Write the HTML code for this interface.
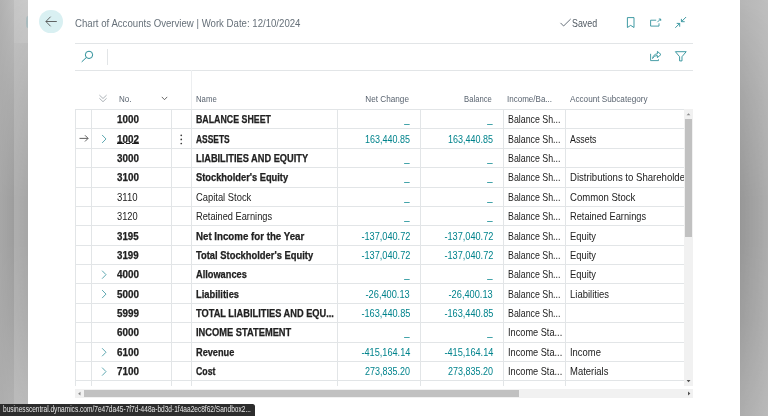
<!DOCTYPE html>
<html lang="en"><head><meta charset="utf-8"><title>Chart of Accounts Overview</title>
<style>
html,body{margin:0;padding:0}
body{width:768px;height:416px;overflow:hidden;position:relative;background:#fff;font-family:"Liberation Sans",sans-serif;font-size:10.2px;color:#212121}
.abs,.t,.hl,.vl{position:absolute}
.t{white-space:nowrap;line-height:12px;height:12px;transform-origin:0 50%}
.r{transform-origin:100% 50%;text-align:right}
.b{font-weight:bold;-webkit-text-stroke:.25px #212121}
.n{color:#00838c}
.h{color:#5a6470;font-size:8.8px}
.hl{height:1px;background:#e2e5e7}
.vl{width:1px;background:#e2e5e7}
svg{position:absolute;overflow:visible}
</style></head><body>

<div class="abs" style="left:0;top:0;width:14px;height:416px;background:linear-gradient(90deg,#b2b2b2,#c0c0c0)"></div>
<div class="abs" style="left:0;top:0;width:14px;height:416px;background:linear-gradient(90deg,rgba(0,0,0,.06),rgba(0,0,0,.18));-webkit-mask-image:linear-gradient(180deg,rgba(0,0,0,.08) 0,rgba(0,0,0,.6) 24%,#000 48%,#000 58%,rgba(0,0,0,.8) 77%,rgba(0,0,0,.35) 100%);mask-image:linear-gradient(180deg,rgba(0,0,0,.08) 0,rgba(0,0,0,.6) 24%,#000 48%,#000 58%,rgba(0,0,0,.8) 77%,rgba(0,0,0,.35) 100%)"></div>
<div class="abs" style="left:14px;top:0;width:14px;height:416px;background:linear-gradient(90deg,#c9c9c9,#cdcdcd)"></div>
<div class="abs" style="left:14px;top:43px;width:14px;height:373px;background:linear-gradient(90deg,#c4c4c4,#c7c7c7)"></div>
<div class="abs" style="left:25.5px;top:16px;width:2.5px;height:11.5px;background:#b0c2c5;border-radius:100% 0 0 100%/50% 0 0 50%"></div>
<div class="abs" style="left:14px;top:0;width:14px;height:416px;background:linear-gradient(90deg,rgba(0,0,0,.11),rgba(0,0,0,.16));-webkit-mask-image:linear-gradient(180deg,rgba(0,0,0,.08) 0,rgba(0,0,0,.6) 24%,#000 48%,#000 58%,rgba(0,0,0,.8) 77%,rgba(0,0,0,.35) 100%);mask-image:linear-gradient(180deg,rgba(0,0,0,.08) 0,rgba(0,0,0,.6) 24%,#000 48%,#000 58%,rgba(0,0,0,.8) 77%,rgba(0,0,0,.35) 100%)"></div>
<div class="abs" style="left:740px;top:0;width:28px;height:416px;background:linear-gradient(90deg,#b9b9b9,#c1c1c1)"></div>
<div class="abs" style="left:740px;top:0;width:28px;height:416px;background:linear-gradient(90deg,rgba(0,0,0,.18),rgba(0,0,0,.10));-webkit-mask-image:linear-gradient(180deg,rgba(0,0,0,.08) 0,rgba(0,0,0,.6) 24%,#000 48%,#000 58%,rgba(0,0,0,.8) 77%,rgba(0,0,0,.35) 100%);mask-image:linear-gradient(180deg,rgba(0,0,0,.08) 0,rgba(0,0,0,.6) 24%,#000 48%,#000 58%,rgba(0,0,0,.8) 77%,rgba(0,0,0,.35) 100%)"></div>
<div class="abs" style="left:39.2px;top:9.8px;width:23.6px;height:23.6px;border-radius:50%;background:#d9f0f2"></div>
<svg style="left:45px;top:15px" width="14" height="14" viewBox="0 0 14 14"><g transform="translate(0.2,0.5)"><path d="M11.6 6H0.8M5.4 1.2L0.7 6l4.7 4.8" fill="none" stroke="#4a4a4a" stroke-width="0.85"/></g></svg>
<div class="t" style="left:75px;top:17.8px;font-size:10.2px;color:#667079;transform:scaleX(.945)">Chart of Accounts Overview | Work Date: 12/10/2024</div>
<svg style="left:559px;top:18px" width="14" height="10" viewBox="0 0 14 10"><g transform="translate(0.7,0.0)"><path d="M0.8 4.9L3.9 8L11 1" fill="none" stroke="#5f6873" stroke-width="0.95"/></g></svg>
<div class="t" style="left:572.3px;top:17.6px;font-size:10.3px;color:#4f5861;transform:scaleX(.86)">Saved</div>
<svg style="left:626px;top:17px" width="11" height="13" viewBox="0 0 11 13"><g transform="translate(0.5,0.0)"><path d="M0.9 0.6H7.5V10.5L4.2 8.4L0.9 10.5Z" fill="none" stroke="#2a8e98" stroke-width="0.9"/></g></svg>
<svg style="left:650px;top:17px" width="13" height="12" viewBox="0 0 13 12"><g transform="translate(0.0,0.9)"><path d="M6.2 2.3H0.6V8.2H9V5.4" fill="none" stroke="#2a8e98" stroke-width="0.85"/><path d="M7.4 4.3L10.4 1.3M8.8 1.1H10.7V3" fill="none" stroke="#2a8e98" stroke-width="0.85"/></g></svg>
<svg style="left:675px;top:17px" width="13" height="13" viewBox="0 0 13 13"><g transform="translate(0.0,0.0)"><path d="M11.1 0L6.5 4.6M6.4 1.9V4.7H9.7M0.3 10.8L4.6 6.5M1.7 6.4H4.7V9.7" fill="none" stroke="#2a8e98" stroke-width="0.9"/></g></svg>
<div class="hl" style="left:75px;top:43px;width:618px"></div>
<div class="hl" style="left:75px;top:69.6px;width:618px"></div>
<svg style="left:81px;top:50px" width="14" height="13" viewBox="0 0 14 13"><g transform="translate(0.0,0.0)"><circle cx="8" cy="4.85" r="3.65" fill="none" stroke="#2a8e98" stroke-width="1"/><path d="M5.3 7.5L0.7 11.9" stroke="#2a8e98" stroke-width="1" fill="none"/></g></svg>
<div class="vl" style="left:107px;top:49px;height:16px"></div>
<svg style="left:650px;top:50px" width="13" height="13" viewBox="0 0 13 13"><g transform="translate(0.0,0.9)"><path d="M0.6 2.9V9.7H8.5V8.4" fill="none" stroke="#2a8e98" stroke-width="0.85"/><path transform="translate(0,-0.4)" d="M2.6 8C3 5.2 4.8 3.5 7.4 3.3V0.9L11 4L7.4 7.1V5.1C5.2 5.1 3.8 6 2.6 8Z" fill="none" stroke="#2a8e98" stroke-width="0.9" stroke-linejoin="round"/></g></svg>
<svg style="left:674px;top:51px" width="14" height="13" viewBox="0 0 14 13"><g transform="translate(0.8,0.1)"><path d="M0.6 0.6H11.4L7.2 5.6V9.8H4.8V5.6Z" fill="none" stroke="#2a8e98" stroke-width="0.9" stroke-linejoin="round"/></g></svg>
<svg style="left:99px;top:94px" width="9" height="10" viewBox="0 0 9 10"><g transform="translate(0.0,0.5)"><path d="M0.4 0.6L4 4L7.6 0.6M0.4 3.8L4 7.2L7.6 3.8" fill="none" stroke="#8a9299" stroke-width="0.7"/></g></svg>
<div class="t h" style="left:118.5px;top:92.6px;transform:scaleX(0.912);">No.</div>
<svg style="left:161px;top:96px" width="8" height="6" viewBox="0 0 8 6"><g transform="translate(0.5,0.5)"><path d="M0.3 0.4L3 3.2L5.7 0.4" fill="none" stroke="#444" stroke-width="0.8"/></g></svg>
<div class="t h" style="left:195.7px;top:92.6px;transform:scaleX(0.884);">Name</div>
<div class="t r h" style="right:359.3px;top:92.6px;transform:scaleX(0.929);">Net Change</div>
<div class="t r h" style="right:276.3px;top:92.6px;transform:scaleX(0.871);">Balance</div>
<div class="t h" style="left:507.2px;top:92.6px;transform:scaleX(0.913);">Income/Ba...</div>
<div class="t h" style="left:569.8px;top:92.6px;transform:scaleX(0.928);">Account Subcategory</div>
<div class="hl" style="left:75px;top:109.00px;width:609px"></div>
<div class="hl" style="left:75px;top:128.38px;width:609px"></div>
<div class="hl" style="left:75px;top:147.77px;width:609px"></div>
<div class="hl" style="left:75px;top:167.16px;width:609px"></div>
<div class="hl" style="left:75px;top:186.54px;width:609px"></div>
<div class="hl" style="left:75px;top:205.93px;width:609px"></div>
<div class="hl" style="left:75px;top:225.31px;width:609px"></div>
<div class="hl" style="left:75px;top:244.70px;width:609px"></div>
<div class="hl" style="left:75px;top:264.08px;width:609px"></div>
<div class="hl" style="left:75px;top:283.47px;width:609px"></div>
<div class="hl" style="left:75px;top:302.85px;width:609px"></div>
<div class="hl" style="left:75px;top:322.24px;width:609px"></div>
<div class="hl" style="left:75px;top:341.62px;width:609px"></div>
<div class="hl" style="left:75px;top:361.00px;width:609px"></div>
<div class="hl" style="left:75px;top:380.39px;width:609px"></div>
<div class="vl" style="left:74.9px;top:109.5px;height:276.2px"></div>
<div class="vl" style="left:91px;top:109.5px;height:276.2px"></div>
<div class="vl" style="left:170.5px;top:109.5px;height:276.2px"></div>
<div class="vl" style="left:336.8px;top:109.5px;height:276.2px"></div>
<div class="vl" style="left:420.05px;top:109.5px;height:276.2px"></div>
<div class="vl" style="left:503.0px;top:109.5px;height:276.2px"></div>
<div class="vl" style="left:565.1px;top:109.5px;height:276.2px"></div>
<div class="vl" style="left:191px;top:70px;height:39px;background:#eceef0"></div>
<div class="vl" style="left:191px;top:109px;height:276.7px"></div>
<div class="abs" style="left:566px;top:109px;width:118px;height:276px;overflow:hidden">
<div class="t" style="left:4.4px;top:24.6px;transform:scaleX(0.867)">Assets</div>
<div class="t" style="left:4.4px;top:63.4px;transform:scaleX(0.94)">Distributions to Shareholders</div>
<div class="t" style="left:4.4px;top:82.7px;transform:scaleX(0.938)">Common Stock</div>
<div class="t" style="left:4.4px;top:102.1px;transform:scaleX(0.907)">Retained Earnings</div>
<div class="t" style="left:4.4px;top:121.5px;transform:scaleX(0.918)">Equity</div>
<div class="t" style="left:4.4px;top:140.9px;transform:scaleX(0.918)">Equity</div>
<div class="t" style="left:4.4px;top:160.3px;transform:scaleX(0.918)">Equity</div>
<div class="t" style="left:4.4px;top:179.7px;transform:scaleX(0.931)">Liabilities</div>
<div class="t" style="left:4.4px;top:237.8px;transform:scaleX(0.925)">Income</div>
<div class="t" style="left:4.4px;top:257.2px;transform:scaleX(0.929)">Materials</div>
</div>
<div class="t b" style="left:116.6px;top:114.2px;transform:scaleX(0.966);">1000</div>
<div class="t b" style="left:196.4px;top:114.2px;transform:scaleX(0.865);">BALANCE SHEET</div>
<div class="t r n" style="right:357.85px;top:114.2px;transform:scaleX(0.934);">_</div>
<div class="t r n" style="right:274.9px;top:114.2px;transform:scaleX(0.934);">_</div>
<div class="t " style="left:508.2px;top:114.2px;transform:scaleX(0.865);">Balance Sh...</div>
<svg style="left:79px;top:134px" width="11" height="9" viewBox="0 0 11 9"><g transform="translate(0.3,0.88)"><path d="M0.2 3.5H8.6M5.7 0.4L8.8 3.5L5.7 6.6" fill="none" stroke="#444" stroke-width="0.85"/></g></svg>
<svg style="left:179px;top:134px" width="5" height="12" viewBox="0 0 5 12"><g transform="translate(0.75,0.38)"><circle cx="1.5" cy="0.9" r="0.85" fill="#3a3a3a"/><circle cx="1.5" cy="5" r="0.85" fill="#3a3a3a"/><circle cx="1.5" cy="9.1" r="0.85" fill="#3a3a3a"/></g></svg>
<svg style="left:101px;top:134px" width="7" height="11" viewBox="0 0 7 11"><g transform="translate(0.6,0.48)"><path d="M0.5 0.5L4.4 4.5L0.5 8.5" fill="none" stroke="#55a3ad" stroke-width="0.95"/></g></svg>
<div class="t b" style="left:116.6px;top:133.6px;transform:scaleX(0.966);text-decoration:underline;text-underline-offset:0.4px;text-decoration-thickness:0.8px;">1002</div>
<div class="t b" style="left:196.4px;top:133.6px;transform:scaleX(0.827);">ASSETS</div>
<div class="t r n" style="right:357.85px;top:133.6px;transform:scaleX(0.882);">163,440.85</div>
<div class="t r n" style="right:274.9px;top:133.6px;transform:scaleX(0.882);">163,440.85</div>
<div class="t " style="left:508.2px;top:133.6px;transform:scaleX(0.865);">Balance Sh...</div>
<div class="t b" style="left:116.6px;top:153.0px;transform:scaleX(0.966);">3000</div>
<div class="t b" style="left:196.4px;top:153.0px;transform:scaleX(0.907);">LIABILITIES AND EQUITY</div>
<div class="t r n" style="right:357.85px;top:153.0px;transform:scaleX(0.934);">_</div>
<div class="t r n" style="right:274.9px;top:153.0px;transform:scaleX(0.934);">_</div>
<div class="t " style="left:508.2px;top:153.0px;transform:scaleX(0.865);">Balance Sh...</div>
<div class="t b" style="left:116.6px;top:172.4px;transform:scaleX(0.966);">3100</div>
<div class="t b" style="left:196.4px;top:172.4px;transform:scaleX(0.913);">Stockholder's Equity</div>
<div class="t r n" style="right:357.85px;top:172.4px;transform:scaleX(0.934);">_</div>
<div class="t r n" style="right:274.9px;top:172.4px;transform:scaleX(0.934);">_</div>
<div class="t " style="left:508.2px;top:172.4px;transform:scaleX(0.865);">Balance Sh...</div>
<div class="t " style="left:116.6px;top:191.7px;transform:scaleX(0.94);">3110</div>
<div class="t " style="left:196.4px;top:191.7px;transform:scaleX(0.921);">Capital Stock</div>
<div class="t r n" style="right:357.85px;top:191.7px;transform:scaleX(0.934);">_</div>
<div class="t r n" style="right:274.9px;top:191.7px;transform:scaleX(0.934);">_</div>
<div class="t " style="left:508.2px;top:191.7px;transform:scaleX(0.865);">Balance Sh...</div>
<div class="t " style="left:116.6px;top:211.1px;transform:scaleX(0.909);">3120</div>
<div class="t " style="left:196.4px;top:211.1px;transform:scaleX(0.907);">Retained Earnings</div>
<div class="t r n" style="right:357.85px;top:211.1px;transform:scaleX(0.934);">_</div>
<div class="t r n" style="right:274.9px;top:211.1px;transform:scaleX(0.934);">_</div>
<div class="t " style="left:508.2px;top:211.1px;transform:scaleX(0.865);">Balance Sh...</div>
<div class="t b" style="left:116.6px;top:230.5px;transform:scaleX(0.953);">3195</div>
<div class="t b" style="left:196.4px;top:230.5px;transform:scaleX(0.953);">Net Income for the Year</div>
<div class="t r n" style="right:357.85px;top:230.5px;transform:scaleX(0.901);">-137,040.72</div>
<div class="t r n" style="right:274.9px;top:230.5px;transform:scaleX(0.901);">-137,040.72</div>
<div class="t " style="left:508.2px;top:230.5px;transform:scaleX(0.865);">Balance Sh...</div>
<div class="t b" style="left:116.6px;top:249.9px;transform:scaleX(0.953);">3199</div>
<div class="t b" style="left:196.4px;top:249.9px;transform:scaleX(0.92);">Total Stockholder's Equity</div>
<div class="t r n" style="right:357.85px;top:249.9px;transform:scaleX(0.901);">-137,040.72</div>
<div class="t r n" style="right:274.9px;top:249.9px;transform:scaleX(0.901);">-137,040.72</div>
<div class="t " style="left:508.2px;top:249.9px;transform:scaleX(0.865);">Balance Sh...</div>
<svg style="left:101px;top:270px" width="7" height="11" viewBox="0 0 7 11"><g transform="translate(0.6,0.18)"><path d="M0.5 0.5L4.4 4.5L0.5 8.5" fill="none" stroke="#55a3ad" stroke-width="0.95"/></g></svg>
<div class="t b" style="left:116.6px;top:269.3px;transform:scaleX(0.966);">4000</div>
<div class="t b" style="left:196.4px;top:269.3px;transform:scaleX(0.906);">Allowances</div>
<div class="t r n" style="right:357.85px;top:269.3px;transform:scaleX(0.934);">_</div>
<div class="t r n" style="right:274.9px;top:269.3px;transform:scaleX(0.934);">_</div>
<div class="t " style="left:508.2px;top:269.3px;transform:scaleX(0.865);">Balance Sh...</div>
<svg style="left:101px;top:289px" width="7" height="11" viewBox="0 0 7 11"><g transform="translate(0.6,0.57)"><path d="M0.5 0.5L4.4 4.5L0.5 8.5" fill="none" stroke="#55a3ad" stroke-width="0.95"/></g></svg>
<div class="t b" style="left:116.6px;top:288.7px;transform:scaleX(0.966);">5000</div>
<div class="t b" style="left:196.4px;top:288.7px;transform:scaleX(0.915);">Liabilities</div>
<div class="t r n" style="right:357.85px;top:288.7px;transform:scaleX(0.907);">-26,400.13</div>
<div class="t r n" style="right:274.9px;top:288.7px;transform:scaleX(0.907);">-26,400.13</div>
<div class="t " style="left:508.2px;top:288.7px;transform:scaleX(0.865);">Balance Sh...</div>
<div class="t b" style="left:116.6px;top:308.1px;transform:scaleX(0.966);">5999</div>
<div class="t b" style="left:196.4px;top:308.1px;transform:scaleX(0.908);">TOTAL LIABILITIES AND EQU...</div>
<div class="t r n" style="right:357.85px;top:308.1px;transform:scaleX(0.901);">-163,440.85</div>
<div class="t r n" style="right:274.9px;top:308.1px;transform:scaleX(0.901);">-163,440.85</div>
<div class="t " style="left:508.2px;top:308.1px;transform:scaleX(0.865);">Balance Sh...</div>
<div class="t b" style="left:116.6px;top:327.4px;transform:scaleX(0.966);">6000</div>
<div class="t b" style="left:196.4px;top:327.4px;transform:scaleX(0.913);">INCOME STATEMENT</div>
<div class="t r n" style="right:357.85px;top:327.4px;transform:scaleX(0.934);">_</div>
<div class="t r n" style="right:274.9px;top:327.4px;transform:scaleX(0.934);">_</div>
<div class="t " style="left:508.2px;top:327.4px;transform:scaleX(0.903);">Income Sta...</div>
<svg style="left:101px;top:347px" width="7" height="11" viewBox="0 0 7 11"><g transform="translate(0.6,0.72)"><path d="M0.5 0.5L4.4 4.5L0.5 8.5" fill="none" stroke="#55a3ad" stroke-width="0.95"/></g></svg>
<div class="t b" style="left:116.6px;top:346.8px;transform:scaleX(0.966);">6100</div>
<div class="t b" style="left:196.4px;top:346.8px;transform:scaleX(0.902);">Revenue</div>
<div class="t r n" style="right:357.85px;top:346.8px;transform:scaleX(0.901);">-415,164.14</div>
<div class="t r n" style="right:274.9px;top:346.8px;transform:scaleX(0.901);">-415,164.14</div>
<div class="t " style="left:508.2px;top:346.8px;transform:scaleX(0.903);">Income Sta...</div>
<svg style="left:101px;top:367px" width="7" height="11" viewBox="0 0 7 11"><g transform="translate(0.6,0.11)"><path d="M0.5 0.5L4.4 4.5L0.5 8.5" fill="none" stroke="#55a3ad" stroke-width="0.95"/></g></svg>
<div class="t b" style="left:116.6px;top:366.2px;transform:scaleX(0.966);">7100</div>
<div class="t b" style="left:196.4px;top:366.2px;transform:scaleX(0.861);">Cost</div>
<div class="t r n" style="right:357.85px;top:366.2px;transform:scaleX(0.882);">273,835.20</div>
<div class="t r n" style="right:274.9px;top:366.2px;transform:scaleX(0.882);">273,835.20</div>
<div class="t " style="left:508.2px;top:366.2px;transform:scaleX(0.903);">Income Sta...</div>
<div class="abs" style="left:684px;top:109.2px;width:8.9px;height:276.5px;background:#f1f1f1"></div>
<div class="abs" style="left:685px;top:118.9px;width:7px;height:118.6px;background:#c1c1c1"></div>
<svg style="left:686px;top:112px" width="6" height="5" viewBox="0 0 6 5"><g transform="translate(0.6,0.8)"><path d="M0 2.4L1.9 0.5L3.8 2.4Z" fill="#8b8b8b"/></g></svg>
<svg style="left:686px;top:379px" width="6" height="5" viewBox="0 0 6 5"><g transform="translate(0.6,0.8)"><path d="M0 0.2L1.95 2.5L3.9 0.2Z" fill="#505050"/></g></svg>
<div class="abs" style="left:75px;top:389px;width:617.9px;height:8.7px;background:#f1f1f1"></div>
<div class="abs" style="left:84.2px;top:390.1px;width:434.4px;height:6.8px;background:#c1c1c1"></div>
<svg style="left:77px;top:391px" width="5" height="6" viewBox="0 0 5 6"><g transform="translate(0.9,0.7)"><path d="M2.6 0L0.2 1.95L2.6 3.9Z" fill="#8b8b8b"/></g></svg>
<svg style="left:687px;top:391px" width="5" height="6" viewBox="0 0 5 6"><g transform="translate(0.8,0.5)"><path d="M0.2 0L2.5 1.95L0.2 3.9Z" fill="#505050"/></g></svg>
<div class="abs" style="left:0;top:404px;width:254.7px;height:12px;background:#2d2d2d;border-top-right-radius:2.5px"></div>
<div class="t" style="left:3px;top:404.3px;font-size:8.2px;color:#e6e6e6;transform:scaleX(0.802)">businesscentral.dynamics.com/7e47da45-7f7d-448a-bd3d-1f4aa2ec8f62/Sandbox2...</div>
</body></html>
